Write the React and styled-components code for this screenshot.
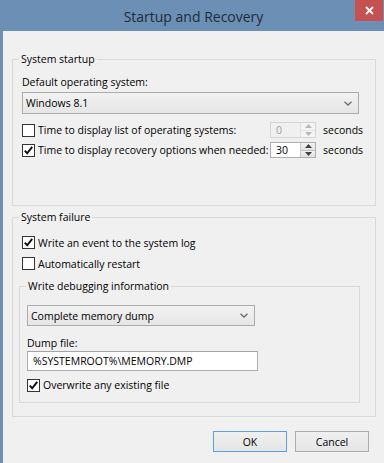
import React from 'react';
import styled, { createGlobalStyle } from 'styled-components';

const Global = createGlobalStyle`
  html, body { margin: 0; padding: 0; background: #f0f0f0; }
  body {
    font-family: "Open Sans", "Liberation Sans", sans-serif;
    font-size: 10.5px;
    color: #000;
  }
  * { box-sizing: border-box; }
`;

const FRAME = '#6c8fb6';

const Window = styled.div`
  width: 384px;
  height: 463px;
  display: flex;
  flex-direction: column;
  border-left: 3px solid ${FRAME};
  background: #f0f0f0;
  overflow: hidden;
`;

const TitleBar = styled.div`
  flex: none;
  height: 31px;
  background: ${FRAME};
  display: grid;
  grid-template-columns: 1fr auto 1fr;
`;

const Title = styled.div`
  grid-column: 2;
  align-self: center;
  font-size: 14px;
  color: #1f2b38;
  padding-top: 1px;
  white-space: nowrap;
`;

const CloseButton = styled.div`
  grid-column: 3;
  justify-self: end;
  align-self: start;
  width: 28px;
  height: 21px;
  margin-right: 1px;
  background: #c75050;
  display: flex;
  align-items: center;
  justify-content: center;
`;

const Body = styled.div`
  flex: 1;
  display: flex;
  flex-direction: column;
  padding: 20px 8px 0 9px;
`;

const Group = styled.fieldset`
  margin: ${p => p.$mt || 0}px 0 0 ${p => p.$ml || 0}px;
  padding: 0 ${p => p.$pr}px ${p => p.$pb}px ${p => p.$pl}px;
  border: 1px solid #d9d9d9;
  min-width: 0;
`;

const Legend = styled.legend`
  padding: 0 2px;
  margin-left: ${p => p.$ml}px;
  line-height: 16px;
`;

const Label = styled.div`
  line-height: 16px;
  margin-top: ${p => p.$mt || 0}px;
`;

const Select = styled.div`
  width: ${p => p.$w}px;
  height: ${p => p.$h}px;
  margin-top: ${p => p.$mt || 0}px;
  border: 1px solid #acacac;
  background: linear-gradient(#f2f2f2, #e6e6e6);
  display: flex;
  align-items: center;
  justify-content: space-between;
  padding: 0 6px 0 3px;
`;

const Row = styled.div`
  height: ${p => p.$h || 20}px;
  margin-top: ${p => p.$mt || 0}px;
  display: flex;
  align-items: center;
`;

const CheckArea = styled.label`
  display: flex;
  align-items: center;
  width: ${p => (p.$w ? `${p.$w}px` : 'auto')};
  flex: none;
`;

const Box = styled.span`
  width: 13px;
  height: 13px;
  flex: none;
  border: 1px solid #333;
  background: #fff;
  margin-right: 3px;
  display: flex;
  align-items: center;
  justify-content: center;
`;

const Spin = styled.div`
  width: 46px;
  height: 16px;
  flex: none;
  display: flex;
  border: 1px solid ${p => (p.$disabled ? '#d5d5d5' : '#abadb3')};
  background: ${p => (p.$disabled ? '#f0f0f0' : '#fff')};
`;

const SpinValue = styled.div`
  flex: 1;
  padding-left: 5px;
  line-height: 14px;
  color: ${p => (p.$disabled ? '#a0a0a0' : '#000')};
`;

const SpinButtons = styled.div`
  width: 15px;
  display: flex;
  flex-direction: column;
  border-left: 1px solid ${p => (p.$disabled ? '#e0e0e0' : '#c8c8c8')};
`;

const SpinHalf = styled.div`
  flex: 1;
  display: flex;
  align-items: center;
  justify-content: center;
  background: ${p => (p.$disabled ? '#f4f4f4' : 'linear-gradient(#f2f2f2, #e2e2e2)')};
  border-bottom: ${p => (p.$top ? `1px solid ${p.$disabled ? '#e4e4e4' : '#c0c0c0'}` : 'none')};
`;

const Unit = styled.span`
  margin-left: 7px;
`;

const TextBox = styled.div`
  width: 231px;
  height: 20px;
  border: 1px solid #abadb3;
  border-top-color: #a0a4ac;
  background: #fff;
  padding-left: 5px;
  line-height: 18px;
`;

const Footer = styled.div`
  display: flex;
  justify-content: flex-end;
  gap: 8px;
  padding: 14px 7px 0 0;
`;

const Button = styled.div`
  width: 74px;
  height: 21px;
  border: 1px solid ${p => (p.$default ? '#5a9fe0' : '#acacac')};
  background: linear-gradient(#f0f0f0, #e5e5e5);
  display: flex;
  align-items: center;
  justify-content: center;
`;

const Chevron = () => (
  <svg width="8" height="5" viewBox="0 0 8 5">
    <polyline points="0.5,0.8 4,4 7.5,0.8" fill="none" stroke="#6d6d6d" strokeWidth="1.4" />
  </svg>
);

const Check = () => (
  <svg width="11" height="11" viewBox="0 0 11 11">
    <polyline points="1.8,5.6 4.2,8.3 9.2,1.8" fill="none" stroke="#111" strokeWidth="2" />
  </svg>
);

const Arrow = ({ up, disabled }) => (
  <svg width="7" height="4" viewBox="0 0 7 4">
    <polygon
      points={up ? '3.5,0 7,4 0,4' : '0,0 7,0 3.5,4'}
      fill={disabled ? '#b8b8b8' : '#404040'}
    />
  </svg>
);

const CheckBox = ({ checked, children, width }) => (
  <CheckArea $w={width}>
    <Box>{checked && <Check />}</Box>
    {children}
  </CheckArea>
);

const Spinner = ({ value, disabled }) => (
  <Spin $disabled={disabled}>
    <SpinValue $disabled={disabled}>{value}</SpinValue>
    <SpinButtons $disabled={disabled}>
      <SpinHalf $top $disabled={disabled}><Arrow up disabled={disabled} /></SpinHalf>
      <SpinHalf $disabled={disabled}><Arrow disabled={disabled} /></SpinHalf>
    </SpinButtons>
  </Spin>
);

export default function App() {
  return (
    <>
      <Global />
      <Window>
        <TitleBar>
          <Title>Startup and Recovery</Title>
          <CloseButton>
            <svg width="9" height="9" viewBox="0 0 9 9">
              <path d="M1 1 L8 8 M8 1 L1 8" stroke="#fff" strokeWidth="1.8" />
            </svg>
          </CloseButton>
        </TitleBar>
        <Body>
          <Group $pl={9} $pr={15} $pb={45}>
            <Legend $ml={-3}>System startup</Legend>
            <Label $mt={7}>Default operating system:</Label>
            <Select $w={337} $h={22} $mt={2}>
              <span>Windows 8.1</span>
              <Chevron />
            </Select>
            <Row $mt={6}>
              <CheckBox width={248}>Time to display list of operating systems:</CheckBox>
              <Spinner value="0" disabled />
              <Unit>seconds</Unit>
            </Row>
            <Row>
              <CheckBox width={248} checked>Time to display recovery options when needed:</CheckBox>
              <Spinner value="30" />
              <Unit>seconds</Unit>
            </Row>
          </Group>
          <Group $mt={3} $pl={9} $pr={15} $pb={13}>
            <Legend $ml={-3}>System failure</Legend>
            <Row $h={21} $mt={7}>
              <CheckBox checked>Write an event to the system log</CheckBox>
            </Row>
            <Row $h={21}>
              <CheckBox>Automatically restart</CheckBox>
            </Row>
            <Group $mt={4} $ml={-3} $pl={7} $pr={10} $pb={7}>
              <Legend $ml={-1}>Write debugging information</Legend>
              <Select $w={228} $h={21} $mt={11}>
                <span>Complete memory dump</span>
                <Chevron />
              </Select>
              <Label $mt={9}>Dump file:</Label>
              <TextBox>%SYSTEMROOT%\MEMORY.DMP</TextBox>
              <Row $mt={4}>
                <CheckBox checked>Overwrite any existing file</CheckBox>
              </Row>
            </Group>
          </Group>
          <Footer>
            <Button $default>OK</Button>
            <Button>Cancel</Button>
          </Footer>
        </Body>
      </Window>
    </>
  );
}
